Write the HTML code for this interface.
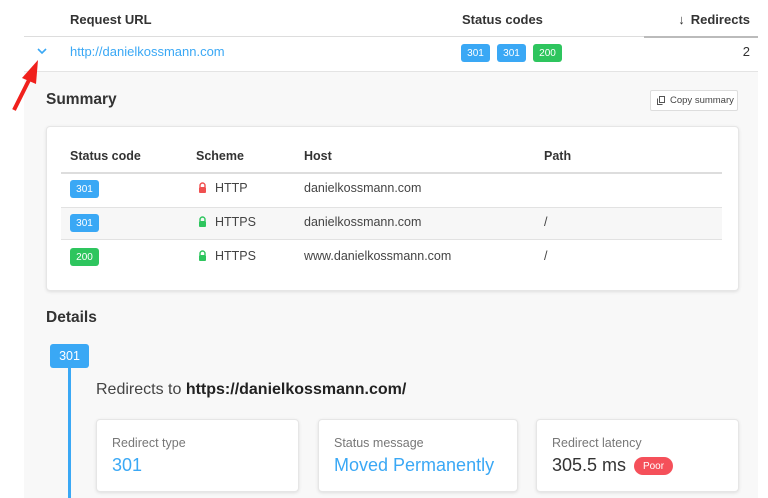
<!DOCTYPE html>
<html><head><style>
*{margin:0;padding:0;box-sizing:border-box}
body{width:768px;height:498px;overflow:hidden;background:#fff;font-family:"Liberation Sans",sans-serif;color:#333;position:relative}
.a{position:absolute;white-space:nowrap}
.b{font-weight:bold}
.bd{position:absolute;height:18px;border-radius:3px;color:#fff;font-size:10px;display:flex;align-items:center;justify-content:center}
.bl{background:#3aa8f5}.gr{background:#2ec55e}
.card{position:absolute;background:#fff;border:1px solid #e6e6e6;border-radius:4px;box-shadow:0 1px 3px rgba(0,0,0,.1)}
</style></head><body>
<div class="a b" style="left:70px;top:12px;font-size:13px">Request URL</div>
<div class="a b" style="left:462px;top:12px;font-size:13px">Status codes</div>
<div class="a b" style="right:18px;top:12px;font-size:13px"><span style="font-weight:normal;margin-right:6px">↓</span>Redirects</div>
<div class="a" style="left:24px;top:36px;width:734px;height:1px;background:#ddd"></div>
<div class="a" style="left:644px;top:36px;width:114px;height:2px;background:#bbb"></div>
<svg class="a" style="left:37px;top:48px" width="10" height="7" viewBox="0 0 10 7"><path d="M1 1l4 4 4-4" fill="none" stroke="#3aa8f5" stroke-width="1.6"/></svg>
<div class="a" style="left:70px;top:44px;font-size:13px;color:#3aa8f5">http://danielkossmann.com</div>
<div class="bd bl" style="left:461px;top:44px;width:29px">301</div>
<div class="bd bl" style="left:497px;top:44px;width:29px">301</div>
<div class="bd gr" style="left:533px;top:44px;width:29px">200</div>
<div class="a" style="right:18px;top:44px;font-size:13px">2</div>
<div class="a" style="left:24px;top:71px;width:734px;height:427px;background:#f8f8f8;border-top:1px solid #e4e4e4"></div>
<svg class="a" style="left:8px;top:56px" width="36" height="60" viewBox="0 0 36 60"><path d="M6 54L22 22" stroke="#f0201c" stroke-width="4"/><path d="M30 4L14 22L28 28Z" fill="#f0201c"/></svg>
<div class="a b" style="left:46px;top:91px;font-size:15.5px">Summary</div>
<div class="a" style="left:650px;top:90px;width:88px;height:21px;background:#fff;border:1px solid #ddd;border-radius:2px;font-size:9.5px;line-height:19px;padding-left:19px;color:#444">Copy summary</div>
<svg class="a" style="left:657px;top:96px" width="8" height="9" viewBox="0 0 8 9"><rect x="2.5" y=".5" width="5" height="6" fill="none" stroke="#555"/><path d="M.5 2.5v6h5" fill="none" stroke="#555"/></svg>
<div class="card" style="left:46px;top:126px;width:693px;height:165px"></div>
<div class="a b" style="left:70px;top:149px;font-size:12.5px">Status code</div>
<div class="a b" style="left:196px;top:149px;font-size:12.5px">Scheme</div>
<div class="a b" style="left:304px;top:149px;font-size:12.5px">Host</div>
<div class="a b" style="left:544px;top:149px;font-size:12.5px">Path</div>
<div class="a" style="left:61px;top:172px;width:661px;height:2px;background:#ddd"></div>
<div class="a" style="left:61px;top:207px;width:661px;height:33px;background:#f7f7f7;border-top:1px solid #e2e2e2;border-bottom:1px solid #e2e2e2"></div>
<div class="bd bl" style="left:70px;top:180px;width:29px">301</div>
<div class="bd bl" style="left:70px;top:214px;width:29px">301</div>
<div class="bd gr" style="left:70px;top:248px;width:29px">200</div>
<svg class="a" style="left:198px;top:182px" width="9" height="11" viewBox="0 0 9 11"><path d="M2 5V3.5a2.5 2.5 0 0 1 5 0V5" fill="none" stroke="#f05050" stroke-width="1.4"/><rect x="1" y="5" width="7" height="6" rx="1" fill="#f05050"/></svg>
<svg class="a" style="left:198px;top:216px" width="9" height="11" viewBox="0 0 9 11"><path d="M2 5V3.5a2.5 2.5 0 0 1 5 0V5" fill="none" stroke="#2ec55e" stroke-width="1.4"/><rect x="1" y="5" width="7" height="6" rx="1" fill="#2ec55e"/></svg>
<svg class="a" style="left:198px;top:250px" width="9" height="11" viewBox="0 0 9 11"><path d="M2 5V3.5a2.5 2.5 0 0 1 5 0V5" fill="none" stroke="#2ec55e" stroke-width="1.4"/><rect x="1" y="5" width="7" height="6" rx="1" fill="#2ec55e"/></svg>
<div class="a" style="left:215px;top:181px;font-size:12.5px;color:#444">HTTP</div>
<div class="a" style="left:215px;top:215px;font-size:12.5px;color:#444">HTTPS</div>
<div class="a" style="left:215px;top:249px;font-size:12.5px;color:#444">HTTPS</div>
<div class="a" style="left:304px;top:181px;font-size:12.5px;color:#444">danielkossmann.com</div>
<div class="a" style="left:304px;top:215px;font-size:12.5px;color:#444">danielkossmann.com</div>
<div class="a" style="left:304px;top:249px;font-size:12.5px;color:#444">www.danielkossmann.com</div>
<div class="a" style="left:544px;top:215px;font-size:12.5px;color:#444">/</div>
<div class="a" style="left:544px;top:249px;font-size:12.5px;color:#444">/</div>
<div class="a b" style="left:46px;top:309px;font-size:15.5px">Details</div>
<div class="a" style="left:68px;top:360px;width:3px;height:138px;background:#3aa8f5"></div>
<div class="a" style="left:50px;top:344px;width:39px;height:24px;background:#3aa8f5;border-radius:3px;color:#fff;font-size:12.5px;line-height:24px;text-align:center">301</div>
<div class="a" style="left:96px;top:381px;font-size:16px;color:#444">Redirects to <b style="color:#222">https://danielkossmann.com/</b></div>
<div class="card" style="left:96px;top:419px;width:203px;height:73px"></div>
<div class="card" style="left:318px;top:419px;width:200px;height:73px"></div>
<div class="card" style="left:536px;top:419px;width:203px;height:73px"></div>
<div class="a" style="left:112px;top:436px;font-size:12.5px;color:#777">Redirect type</div>
<div class="a" style="left:334px;top:436px;font-size:12.5px;color:#777">Status message</div>
<div class="a" style="left:552px;top:436px;font-size:12.5px;color:#777">Redirect latency</div>
<div class="a" style="left:112px;top:455px;font-size:18px;color:#3aa8f5">301</div>
<div class="a" style="left:334px;top:455px;font-size:18px;color:#3aa8f5">Moved Permanently</div>
<div class="a" style="left:552px;top:455px;font-size:18px;color:#333">305.5 ms</div>
<div class="a" style="left:634px;top:457px;width:39px;height:18px;background:#f5505a;border-radius:9px;color:#fff;font-size:10px;display:flex;align-items:center;justify-content:center">Poor</div>
</body></html>
